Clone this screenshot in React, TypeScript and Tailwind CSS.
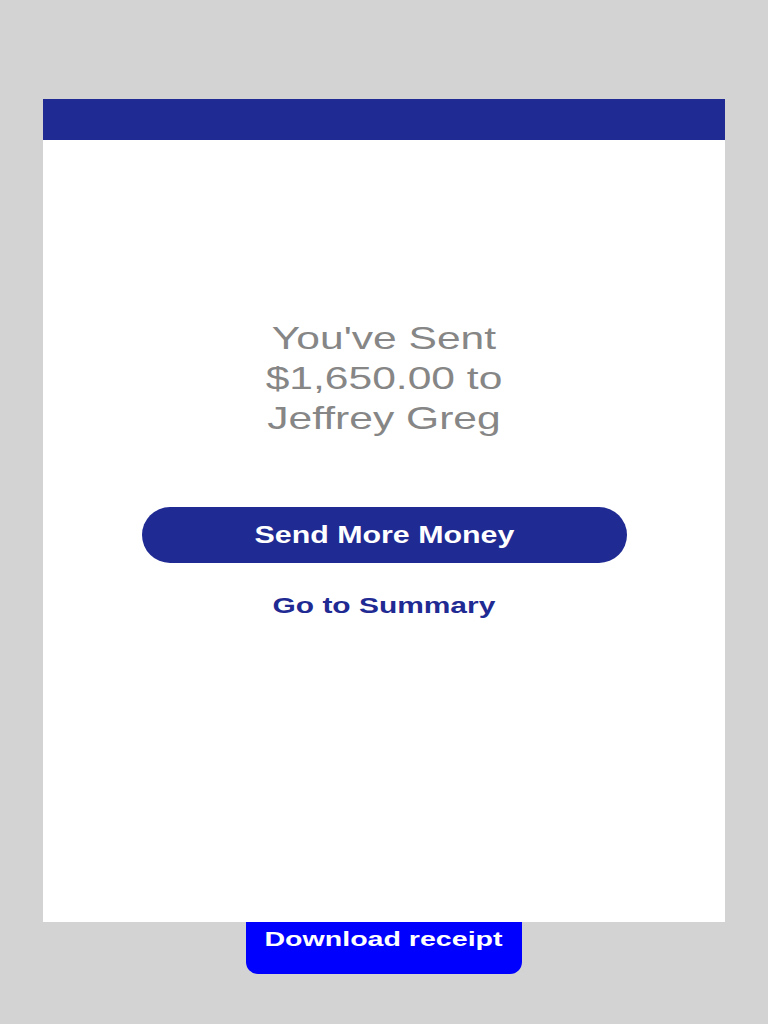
import React from 'react';

const navy = 'bg-[#1f2a93]';

export default function App() {
  return (
    <div className="min-h-screen bg-[#d3d3d3] px-[43px] pt-[99px] font-['Liberation_Sans',Arial,sans-serif]">
      {/* Confirmation card */}
      <div className="relative z-10 flex h-[823px] flex-col bg-white">
        <div className={`h-[41px] ${navy}`} />

        <div className="flex flex-col items-center pt-[178px]">
          <p className="inline-block scale-x-[1.33] text-center text-[32px] leading-[40px] text-[#868686]">
            You've Sent
            <br />
            $1,650.00 to
            <br />
            Jeffrey Greg
          </p>

          <button
            className={`mt-[69px] flex h-[56px] w-[485px] items-center justify-center rounded-full ${navy} text-white`}
          >
            <span className="inline-block scale-x-[1.32] text-[23px] font-bold leading-[26px]">Send More Money</span>
          </button>

          <button className="mt-[30px] text-[#1f2a93]">
            <span className="inline-block scale-x-[1.36] text-[22px] font-bold leading-[26px]">Go to Summary</span>
          </button>
        </div>
      </div>

      {/* Receipt button tucked under the card */}
      <div className="flex justify-center">
        <button className="w-[276px] rounded-b-xl bg-[#0000ff] pt-[5px] pb-[21px] text-white">
          <span className="inline-block scale-x-[1.36] text-[21px] font-bold leading-[24px]">Download receipt</span>
        </button>
      </div>
    </div>
  );
}
